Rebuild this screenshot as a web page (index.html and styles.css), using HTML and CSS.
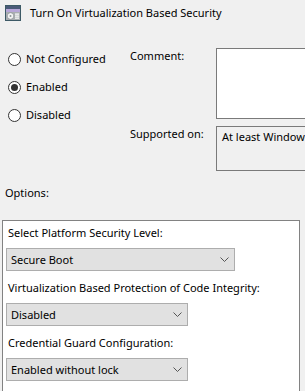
FILE: index.html
```html
<!DOCTYPE html>
<html lang="en">
<head>
    <meta charset="UTF-8">
    <title>Turn On Virtualization Based Security</title>
    <link rel="stylesheet" href="styles.css">
</head>
<body>
    <div class="title-bar">
        <svg class="policy-icon" width="16" height="16" viewBox="0 0 16 16">
            <rect x="0.5" y="0.5" width="15" height="15" fill="#8c9498" stroke="#3d5a66"/>
            <rect x="1" y="1" width="14" height="3" fill="#4a5a78"/>
            <rect x="1" y="4" width="14" height="3" fill="#b7a6d8"/>
            <rect x="1" y="7" width="14" height="8" fill="#a9adb0"/>
            <circle cx="5.5" cy="11" r="3.3" fill="#f4f4f4" stroke="#7a7f84" stroke-width="0.6"/>
            <circle cx="5.5" cy="11" r="1" fill="#8c9498"/>
            <rect x="10" y="8.5" width="4" height="1.2" fill="#ffffff"/>
            <rect x="10" y="10.5" width="4" height="1.2" fill="#ffffff"/>
            <rect x="10" y="12.5" width="4" height="1.2" fill="#ffffff"/>
        </svg>
        <span class="title">Turn On Virtualization Based Security</span>
    </div>

    <div class="setting">
        <div class="state">
            <label class="radio"><span class="dot"></span>Not Configured</label>
            <label class="radio"><span class="dot checked"></span>Enabled</label>
            <label class="radio"><span class="dot"></span>Disabled</label>
        </div>
        <div class="meta">
            <span class="meta-label">Comment:</span>
            <div class="comment-box"></div>
            <span class="meta-label">Supported on:</span>
            <div class="supported-box">At least Windows Server 2016, Windows 10</div>
        </div>
    </div>

    <div class="options-label">Options:</div>

    <div class="options">
        <div class="field">
            <div class="field-label">Select Platform Security Level:</div>
            <div class="dropdown wide">Secure Boot<svg class="chevron" width="9" height="5" viewBox="0 0 9 5"><path d="M0.5 0.5 L4.5 4.5 L8.5 0.5" fill="none" stroke="#555" stroke-width="1"/></svg></div>
        </div>
        <div class="field">
            <div class="field-label">Virtualization Based Protection of Code Integrity:</div>
            <div class="dropdown">Disabled<svg class="chevron" width="9" height="5" viewBox="0 0 9 5"><path d="M0.5 0.5 L4.5 4.5 L8.5 0.5" fill="none" stroke="#555" stroke-width="1"/></svg></div>
        </div>
        <div class="field">
            <div class="field-label">Credential Guard Configuration:</div>
            <div class="dropdown">Enabled without lock<svg class="chevron" width="9" height="5" viewBox="0 0 9 5"><path d="M0.5 0.5 L4.5 4.5 L8.5 0.5" fill="none" stroke="#555" stroke-width="1"/></svg></div>
        </div>
    </div>
</body>
</html>
```

FILE: styles.css
```css
body {
    margin: 0;
    width: 305px;
    height: 391px;
    overflow: hidden;
    background-color: #f0f0f0;
    color: #000;
    font-family: "Noto Sans", sans-serif;
    font-size: 11px;
    line-height: 16px;
}
.title-bar {
    display: flex;
    align-items: center;
    gap: 9px;
    height: 16px;
    padding: 5px 0 0 5px;
}
.policy-icon {
    flex: none;
}
.setting {
    display: flex;
    margin-top: 24px;
}
.state {
    flex: none;
    width: 122px;
    padding-left: 8px;
}
.radio {
    display: flex;
    align-items: center;
    gap: 5px;
    height: 28px;
}
.dot {
    box-sizing: border-box;
    width: 13px;
    height: 13px;
    border: 1px solid #333;
    border-radius: 50%;
    background-color: #fff;
    position: relative;
}
.dot.checked::after {
    content: "";
    position: absolute;
    left: 2px;
    top: 2px;
    width: 7px;
    height: 7px;
    border-radius: 50%;
    background-color: #333;
}
.meta {
    flex: none;
    display: grid;
    grid-template-columns: 86px 220px;
    row-gap: 7px;
    padding-top: 3px;
}
.comment-box {
    height: 69px;
    border: 1px solid #7a7a7a;
    border-right: none;
    background-color: #fff;
}
.supported-box {
    height: 43px;
    padding-left: 5px;
    border: 1px solid #7a7a7a;
    border-right: none;
    white-space: nowrap;
    overflow: hidden;
    line-height: 20px;
}
.options-label {
    margin-top: 14px;
    padding-left: 5px;
}
.options {
    box-sizing: border-box;
    width: 298px;
    height: 200px;
    margin: 19px 0 0 2px;
    padding: 4px 3px 0;
    border: 1px solid #828282;
    background-color: #fff;
}
.field + .field {
    margin-top: 9px;
}
.field-label {
    padding-left: 2px;
    margin-bottom: 7px;
}
.dropdown {
    box-sizing: border-box;
    display: flex;
    align-items: center;
    justify-content: space-between;
    width: 182px;
    height: 23px;
    padding: 0 5px 0 4px;
    border: 1px solid #adadad;
    background-color: #e1e1e1;
}
.dropdown.wide {
    width: 229px;
}
.chevron {
    flex: none;
}
```
